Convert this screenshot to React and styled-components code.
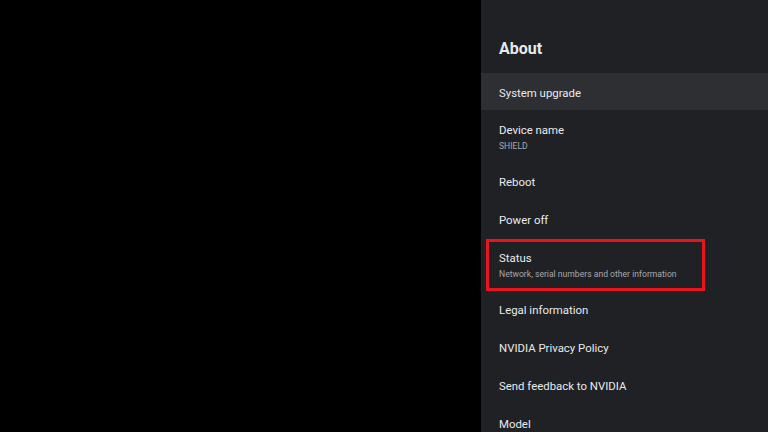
import React from "react";
import styled, { createGlobalStyle } from "styled-components";

const Global = createGlobalStyle`
  html, body { margin: 0; padding: 0; background: #000; }
  body { font-family: Roboto, "Noto Sans", Arial, sans-serif; }
  #root { width: 768px; height: 432px; overflow: hidden; }
`;

const Screen = styled.div`
  display: flex;
  width: 768px;
  height: 432px;
  background: #000;
  overflow: hidden;
`;

const Backdrop = styled.div`
  flex: 0 0 481px;
  background: #000;
`;

const Panel = styled.div`
  flex: 1;
  display: flex;
  flex-direction: column;
  background: #202124;
  overflow: hidden;
`;

const Title = styled.h1`
  flex: 0 0 73px;
  margin: 0;
  height: 73px;
  box-sizing: border-box;
  padding: 39px 0 0 18px;
  font-size: 16px;
  font-weight: 700;
  line-height: 20px;
  color: #e8eaed;
`;

const Row = styled.div`
  position: relative;
  flex: 0 0 auto;
  box-sizing: border-box;
  height: ${(p) => (p.$tall ? 52 : 38)}px;
  display: flex;
  flex-direction: column;
  justify-content: center;
  padding: 2px 0 0 18px;
  background: ${(p) => (p.$focused ? "#2e2f33" : "transparent")};
`;

const Label = styled.div`
  font-size: 11.4px;
  line-height: 16px;
  color: #e8eaed;
`;

const Sub = styled.div`
  font-size: 8.6px;
  line-height: 12px;
  margin-top: 2px;
  color: #a6a8ad;
`;

const Marker = styled.div`
  position: absolute;
  left: 5px;
  top: 1px;
  width: 219px;
  height: 52px;
  box-sizing: border-box;
  border: 3px solid #e8141f;
  pointer-events: none;
`;

const items = [
  { label: "System upgrade", focused: true, h: 37 },
  { label: "Device name", sub: "SHIELD" },
  { label: "Reboot" },
  { label: "Power off" },
  { label: "Status", sub: "Network, serial numbers and other information", marked: true },
  { label: "Legal information" },
  { label: "NVIDIA Privacy Policy" },
  { label: "Send feedback to NVIDIA" },
  { label: "Model" },
];

export default function App() {
  return (
    <>
      <Global />
      <Screen>
        <Backdrop />
        <Panel>
          <Title>About</Title>
          {items.map((it) => (
            <Row
              key={it.label}
              $tall={!!it.sub}
              $focused={it.focused}
              style={it.h ? { height: it.h } : undefined}
            >
              <Label>{it.label}</Label>
              {it.sub && <Sub>{it.sub}</Sub>}
              {it.marked && <Marker />}
            </Row>
          ))}
        </Panel>
      </Screen>
    </>
  );
}
